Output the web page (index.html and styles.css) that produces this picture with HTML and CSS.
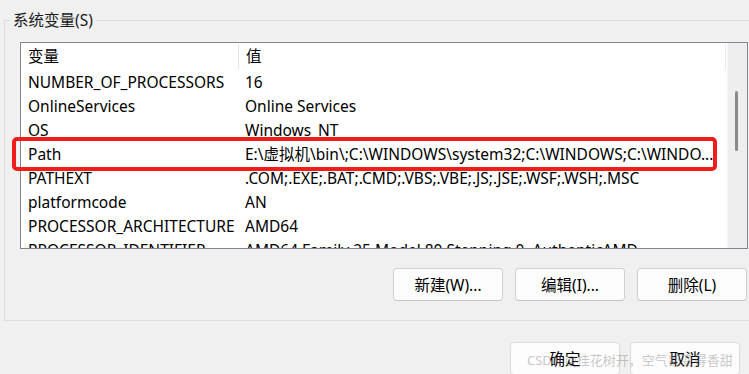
FILE: index.html
```html
<!DOCTYPE html>
<html lang="zh-CN">
<head>
    <meta charset="UTF-8">
    <title>系统变量</title>
    <link rel="stylesheet" href="styles.css">
</head>
<body>
    <div class="dialog">
        <fieldset class="group">
            <legend>系统变量(S)</legend>

            <div class="list">
                <div class="table">
                    <div class="row head">
                        <div class="cell name">变量</div>
                        <div class="cell value">值</div>
                    </div>
                    <div class="row">
                        <div class="cell name">NUMBER_OF_PROCESSORS</div>
                        <div class="cell value">16</div>
                    </div>
                    <div class="row">
                        <div class="cell name">OnlineServices</div>
                        <div class="cell value">Online Services</div>
                    </div>
                    <div class="row">
                        <div class="cell name">OS</div>
                        <div class="cell value">Windows_NT</div>
                    </div>
                    <div class="row">
                        <div class="cell name">Path</div>
                        <div class="cell value">E:\虚拟机\bin\;C:\WINDOWS\system32;C:\WINDOWS;C:\WINDO...</div>
                    </div>
                    <div class="row">
                        <div class="cell name">PATHEXT</div>
                        <div class="cell value">.COM;.EXE;.BAT;.CMD;.VBS;.VBE;.JS;.JSE;.WSF;.WSH;.MSC</div>
                    </div>
                    <div class="row">
                        <div class="cell name">platformcode</div>
                        <div class="cell value">AN</div>
                    </div>
                    <div class="row">
                        <div class="cell name">PROCESSOR_ARCHITECTURE</div>
                        <div class="cell value">AMD64</div>
                    </div>
                    <div class="row">
                        <div class="cell name">PROCESSOR_IDENTIFIER</div>
                        <div class="cell value">AMD64 Family 25 Model 80 Stepping 0, AuthenticAMD</div>
                    </div>
                </div>
                <div class="scrollbar">
                    <div class="thumb"></div>
                </div>
            </div>

            <div class="actions">
                <button class="btn">新建(W)...</button>
                <button class="btn">编辑(I)...</button>
                <button class="btn">删除(L)</button>
            </div>
        </fieldset>

        <div class="footer">
            <button class="btn btn-light">确定</button>
            <button class="btn btn-light">取消</button>
        </div>

        <!-- 标注框 -->
        <div class="mark"></div>
        <div class="watermark">CSDN @桂花树开，空气都变得香甜</div>
    </div>
</body>
</html>
```

FILE: styles.css
```css
html, body {
    margin: 0;
    padding: 0;
    height: 100%;
    overflow: hidden;
}
body {
    background-color: #f0f0f0;
    color: #000;
    font-family: "Noto Sans", "Noto Sans CJK SC", sans-serif;
    font-size: 15.5px;
}
.dialog {
    position: relative;
    height: 100%;
    padding-top: 10px;
    box-sizing: border-box;
}
.group {
    margin: 0 -20px 0 4px;
    padding: 12px 0 19px 15px;
    border: 1px solid #dcdcdc;
    min-width: 0;
}
.group legend {
    margin-left: -10px;
    padding: 0 3px 0 3px;
    line-height: 20px;
    height: 20px;
    color: #1a1a1a;
}
.list {
    display: flex;
    width: 726px;
    height: 205px;
    border: 1px solid #828790;
    background: #fff;
    overflow: hidden;
}
.table {
    width: 706px;
    flex: none;
}
.row {
    display: flex;
    height: 24px;
    line-height: 24px;
    white-space: nowrap;
}
.row.head {
    height: 27px;
    line-height: 27px;
}
.cell {
    overflow: hidden;
}
.name {
    width: 210px;
    padding-left: 7px;
    flex: none;
}
.value {
    flex: 1;
    padding-left: 7px;
}
.row.head .name {
    border-right: 1px solid #e5e5e5;
    margin: 1px 0;
    line-height: 25px;
}
.row.head .value {
    margin-right: 1px;
    border-right: 1px solid #e8e8e8;
    margin-top: 1px;
    margin-bottom: 1px;
    line-height: 25px;
}
.scrollbar {
    width: 20px;
    flex: none;
    background: #eeeeee;
    border-left: 1px solid #f7f7f7;
    box-sizing: border-box;
}
.thumb {
    width: 3px;
    height: 60px;
    margin: 48px 0 0 7px;
    border-radius: 2px;
    background: #8a8a8a;
}
.actions {
    display: flex;
    justify-content: flex-end;
    gap: 12px;
    width: 727px;
    margin-top: 19px;
}
.btn {
    width: 110px;
    height: 33px;
    background: #fdfdfd;
    border: 1px solid #d0d0d0;
    border-bottom-color: #c4c4c4;
    border-radius: 4px;
    font-family: inherit;
    font-size: 15.5px;
    color: #000;
    padding: 0;
}
.footer {
    display: flex;
    justify-content: flex-end;
    gap: 10px;
    margin-top: 21px;
    padding-right: 9px;
}
.btn-light {
    border-color: #dadada;
}
.mark {
    position: absolute;
    left: 12px;
    top: 137px;
    width: 697px;
    height: 26px;
    border: 4px solid #f01e1a;
    border-radius: 5px;
}
.watermark {
    position: absolute;
    left: 527px;
    top: 350px;
    font-size: 13px;
    line-height: 20px;
    color: rgba(130, 130, 130, 0.45);
    white-space: nowrap;
}
```
